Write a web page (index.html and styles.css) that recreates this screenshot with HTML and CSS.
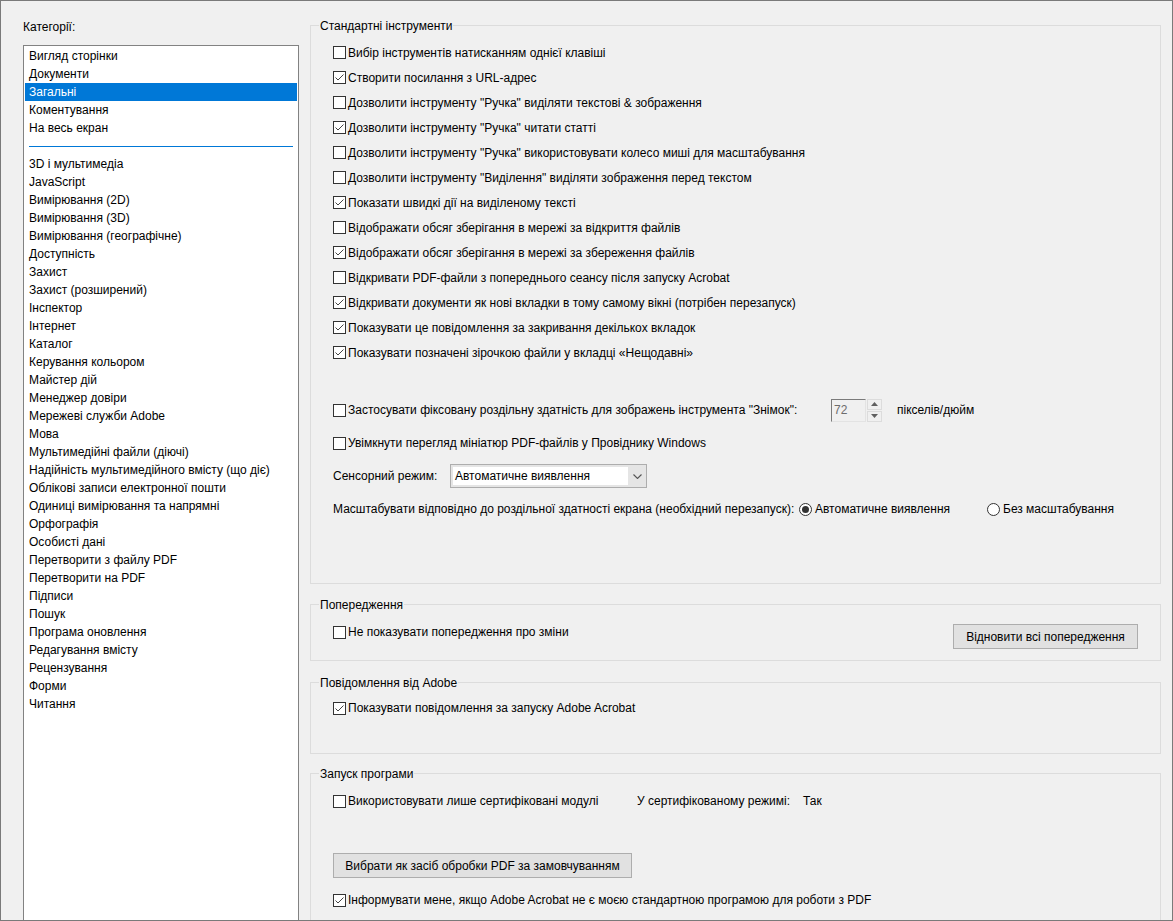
FILE: index.html
```html
<!DOCTYPE html>
<html lang="uk">
<head>
<meta charset="utf-8">
<title>Налаштування</title>
<link rel="stylesheet" href="styles.css">
</head>
<body>
<div class="window">
  <aside class="cats">
    <div class="cats-label">Категорії:</div>
    <ul class="cat-list">
      <li>Вигляд сторінки</li>
      <li>Документи</li>
      <li class="sel">Загальні</li>
      <li>Коментування</li>
      <li>На весь екран</li>
      <li class="sep"></li>
      <li>3D і мультимедіа</li>
      <li>JavaScript</li>
      <li>Вимірювання (2D)</li>
      <li>Вимірювання (3D)</li>
      <li>Вимірювання (географічне)</li>
      <li>Доступність</li>
      <li>Захист</li>
      <li>Захист (розширений)</li>
      <li>Інспектор</li>
      <li>Інтернет</li>
      <li>Каталог</li>
      <li>Керування кольором</li>
      <li>Майстер дій</li>
      <li>Менеджер довіри</li>
      <li>Мережеві служби Adobe</li>
      <li>Мова</li>
      <li>Мультимедійні файли (діючі)</li>
      <li>Надійність мультимедійного вмісту (що діє)</li>
      <li>Облікові записи електронної пошти</li>
      <li>Одиниці вимірювання та напрямні</li>
      <li>Орфографія</li>
      <li>Особисті дані</li>
      <li>Перетворити з файлу PDF</li>
      <li>Перетворити на PDF</li>
      <li>Підписи</li>
      <li>Пошук</li>
      <li>Програма оновлення</li>
      <li>Редагування вмісту</li>
      <li>Рецензування</li>
      <li>Форми</li>
      <li>Читання</li>
    </ul>
  </aside>

  <main class="prefs">
    <fieldset class="group g-tools">
      <legend>Стандартні інструменти</legend>
      <div class="rows">
        <label class="check row"><span class="box"></span>Вибір інструментів натисканням однієї клавіші</label>
        <label class="check row"><span class="box"><svg viewBox="0 0 11 11"><polyline points="1.5,5.5 4,8 9.5,2.5"/></svg></span>Створити посилання з URL-адрес</label>
        <label class="check row"><span class="box"></span>Дозволити інструменту "Ручка" виділяти текстові &amp; зображення</label>
        <label class="check row"><span class="box"><svg viewBox="0 0 11 11"><polyline points="1.5,5.5 4,8 9.5,2.5"/></svg></span>Дозволити інструменту "Ручка" читати статті</label>
        <label class="check row"><span class="box"></span>Дозволити інструменту "Ручка" використовувати колесо миші для масштабування</label>
        <label class="check row"><span class="box"></span>Дозволити інструменту "Виділення" виділяти зображення перед текстом</label>
        <label class="check row"><span class="box"><svg viewBox="0 0 11 11"><polyline points="1.5,5.5 4,8 9.5,2.5"/></svg></span>Показати швидкі дії на виділеному тексті</label>
        <label class="check row"><span class="box"></span>Відображати обсяг зберігання в мережі за відкриття файлів</label>
        <label class="check row"><span class="box"><svg viewBox="0 0 11 11"><polyline points="1.5,5.5 4,8 9.5,2.5"/></svg></span>Відображати обсяг зберігання в мережі за збереження файлів</label>
        <label class="check row"><span class="box"></span>Відкривати PDF-файли з попереднього сеансу після запуску Acrobat</label>
        <label class="check row"><span class="box"><svg viewBox="0 0 11 11"><polyline points="1.5,5.5 4,8 9.5,2.5"/></svg></span>Відкривати документи як нові вкладки в тому самому вікні (потрібен перезапуск)</label>
        <label class="check row"><span class="box"><svg viewBox="0 0 11 11"><polyline points="1.5,5.5 4,8 9.5,2.5"/></svg></span>Показувати це повідомлення за закривання декількох вкладок</label>
        <label class="check row"><span class="box"><svg viewBox="0 0 11 11"><polyline points="1.5,5.5 4,8 9.5,2.5"/></svg></span>Показувати позначені зірочкою файли у вкладці «Нещодавні»</label>
      </div>

      <div class="more">
        <div class="line">
          <label class="check w-snap"><span class="box"></span>Застосувати фіксовану роздільну здатність для зображень інструмента "Знімок":</label>
          <div class="spin">
            <span class="spin-field">72</span>
            <span class="spin-btns">
              <span class="spin-btn"><svg viewBox="0 0 7 4"><polygon points="0,4 7,4 3.5,0"/></svg></span>
              <span class="spin-btn"><svg viewBox="0 0 7 4"><polygon points="0,0 7,0 3.5,4"/></svg></span>
            </span>
          </div>
          <span class="unit">пікселів/дюйм</span>
        </div>
        <div class="line">
          <label class="check"><span class="box"></span>Увімкнути перегляд мініатюр PDF-файлів у Провіднику Windows</label>
        </div>
        <div class="line">
          <span class="w-touch">Сенсорний режим:</span>
          <div class="select">
            <span class="select-field">Автоматичне виявлення</span>
            <span class="select-arrow"><svg viewBox="0 0 9 5"><polyline points="0.5,0.5 4.5,4.5 8.5,0.5"/></svg></span>
          </div>
        </div>
        <div class="line">
          <span class="w-scale">Масштабувати відповідно до роздільної здатності екрана (необхідний перезапуск):</span>
          <label class="radio w-radio1"><span class="dot on"></span>Автоматичне виявлення</label>
          <label class="radio"><span class="dot"></span>Без масштабування</label>
        </div>
      </div>
    </fieldset>

    <fieldset class="group g-warn">
      <legend>Попередження</legend>
      <div class="split">
        <label class="check text-line"><span class="box"></span>Не показувати попередження про зміни</label>
        <button class="btn btn-reset" type="button">Відновити всі попередження</button>
      </div>
    </fieldset>

    <fieldset class="group g-msg">
      <legend>Повідомлення від Adobe</legend>
      <label class="check text-line"><span class="box"><svg viewBox="0 0 11 11"><polyline points="1.5,5.5 4,8 9.5,2.5"/></svg></span>Показувати повідомлення за запуску Adobe Acrobat</label>
    </fieldset>

    <fieldset class="group g-start">
      <legend>Запуск програми</legend>
      <div class="text-line plain">
        <label class="check w-cert"><span class="box"></span>Використовувати лише сертифіковані модулі</label>
        <span class="w-mode">У сертифікованому режимі:</span>
        <span>Так</span>
      </div>
      <button class="btn btn-default" type="button">Вибрати як засіб обробки PDF за замовчуванням</button>
      <label class="check text-line inform"><span class="box"><svg viewBox="0 0 11 11"><polyline points="1.5,5.5 4,8 9.5,2.5"/></svg></span>Інформувати мене, якщо Adobe Acrobat не є моєю стандартною програмою для роботи з PDF</label>
    </fieldset>
  </main>
</div>
</body>
</html>
```

FILE: styles.css
```css
* { box-sizing: border-box; }

html, body {
  margin: 0;
  padding: 0;
  background: #f0f0f0;
}

body {
  font-family: "Liberation Sans", Arial, sans-serif;
  font-size: 12px;
  line-height: 16px;
  color: #000;
}

.window {
  width: 1173px;
  height: 921px;
  border: 1px solid #7a7a7a;
  background: #f0f0f0;
  display: flex;
  overflow: hidden;
}

/* ---------- categories ---------- */
.cats {
  width: 309px;
  flex: none;
  padding-left: 22px;
  padding-right: 11px;
  display: flex;
  flex-direction: column;
}

.cats-label {
  margin-top: 17px;
  height: 16px;
  line-height: 18px;
  margin-bottom: 11px;
}

.cat-list {
  list-style: none;
  margin: 0 0 -2px 0;
  padding: 1px;
  flex: 1;
  background: #fff;
  border: 1px solid #828282;
}

.cat-list li {
  height: 18px;
  line-height: 18px;
  padding-left: 4px;
  white-space: nowrap;
}

.cat-list li.sel {
  background: #0078d7;
  color: #fff;
}

.cat-list li.sep {
  display: flex;
  align-items: center;
  padding: 0 4px;
}

.cat-list li.sep::before {
  content: "";
  flex: 1;
  height: 1px;
  background: #0078d7;
  margin-top: 1px;
}

/* ---------- right panel ---------- */
.prefs {
  flex: 1;
  padding-top: 16px;
  padding-right: 11px;
  display: flex;
  flex-direction: column;
}

.group {
  margin: 0;
  padding: 0 0 0 22px;
  border: 1px solid #dcdcdc;
  min-width: 0;
}

.group legend {
  margin-left: -14px;
  padding: 0 1px;
  line-height: 19px;
  height: 16px;
}

.g-tools { padding-top: 7px; padding-bottom: 62px; }
.g-warn { margin-top: 12px; padding-top: 12px; padding-bottom: 11px; }
.g-msg { margin-top: 13px; padding-top: 10px; padding-bottom: 37px; }
.g-start { margin-top: 11px; padding-top: 12px; padding-bottom: 40px; }

.rows { display: flex; flex-direction: column; }
.row { height: 25px; }

.check {
  display: flex;
  align-items: center;
  white-space: nowrap;
}

.box {
  width: 13px;
  height: 13px;
  flex: none;
  border: 1px solid #333;
  background: #fff;
  margin-right: 2px;
  display: flex;
}

.box svg {
  width: 11px;
  height: 11px;
  fill: none;
  stroke: #444;
  stroke-width: 1;
}

.more {
  margin-top: 33px;
  display: flex;
  flex-direction: column;
  gap: 9px;
}

.line {
  height: 24px;
  display: flex;
  align-items: center;
  white-space: nowrap;
}

.w-snap { width: 498px; flex: none; }
.w-touch { width: 117px; flex: none; }
.w-scale { width: 466px; flex: none; }
.w-radio1 { width: 188px; flex: none; }

.spin {
  display: flex;
  height: 23px;
  align-items: stretch;
}

.spin-field {
  width: 35px;
  border-top: 1px solid #7a7a7a;
  border-left: 1px solid #7a7a7a;
  border-right: 1px solid #e3e3e3;
  border-bottom: 1px solid #e3e3e3;
  background: #f0f0f0;
  color: #6d6d6d;
  padding-left: 2px;
  line-height: 20px;
}

.spin-btns {
  margin-left: 1px;
  width: 15px;
  display: flex;
  flex-direction: column;
  gap: 1px;
}

.spin-btn {
  flex: 1;
  border: 1px solid #dcdcdc;
  background: #f0f0f0;
  display: flex;
  align-items: center;
  justify-content: center;
}

.spin-btn svg {
  width: 7px;
  height: 4px;
  fill: #606060;
}

.unit { margin-left: 15px; }

.select {
  width: 197px;
  height: 24px;
  border: 1px solid #adadad;
  background: #e5e5e5;
  display: flex;
  padding: 2px 0 2px 2px;
}

.select-field {
  flex: 1;
  background: #fff;
  padding-left: 2px;
  line-height: 18px;
}

.select-arrow {
  width: 18px;
  display: flex;
  align-items: center;
  justify-content: center;
}

.select-arrow svg {
  width: 9px;
  height: 5px;
  fill: none;
  stroke: #555;
  stroke-width: 1.1;
}

.radio {
  display: flex;
  align-items: center;
}

.dot {
  width: 13px;
  height: 13px;
  border: 1px solid #333;
  border-radius: 50%;
  background: #fff;
  margin-right: 3px;
  display: flex;
  align-items: center;
  justify-content: center;
  flex: none;
}

.dot.on::after {
  content: "";
  width: 7px;
  height: 7px;
  border-radius: 50%;
  background: #333;
}

.split {
  display: flex;
  justify-content: space-between;
  align-items: flex-start;
  padding-right: 22px;
}

.text-line {
  height: 16px;
  line-height: 16px;
}

.plain {
  display: flex;
  align-items: center;
  white-space: nowrap;
}

.w-cert { width: 304px; flex: none; }
.w-mode { width: 166px; flex: none; }

.btn {
  font: inherit;
  color: #000;
  height: 25px;
  background: #e1e1e1;
  border: 1px solid #adadad;
  padding: 0;
  margin: 0;
  display: block;
}

.btn-reset { width: 185px; }
.btn-default { width: 299px; margin-top: 44px; }

.inform { margin-top: 14px; }
```
